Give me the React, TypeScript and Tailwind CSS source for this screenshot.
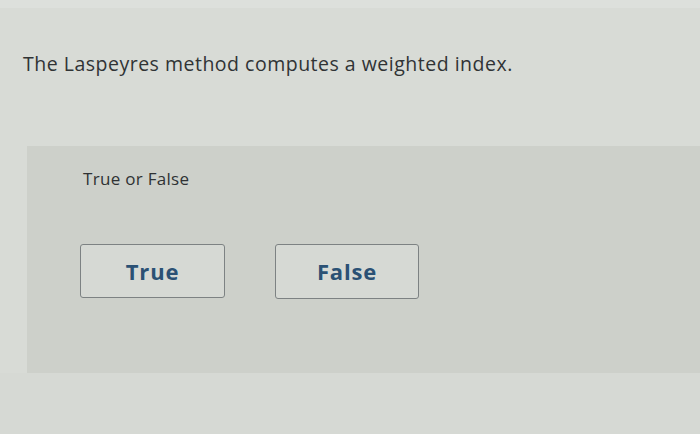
export default function App() {
  return (
    <div className="w-[700px] h-[434px] overflow-hidden bg-[#d8dbd6] font-['Open_Sans',sans-serif] text-[#2e3133]">
      <div className="h-[8px] bg-[#dde0dc]" />
      <div className="pl-[23px] pt-[42px] h-[138px]">
        <p className="text-[19.5px] leading-[28px] tracking-[0.5px] text-[#303335]">
          The Laspeyres method computes a weighted index.
        </p>
      </div>
      <div className="ml-[27px] h-[227px] bg-[#cdd0ca] pt-[22px] pl-[56px]">
        <p className="text-[17px] leading-[22px] tracking-[0.3px] text-[#2f3234]">True or False</p>
        <div className="flex gap-[50px] mt-[54px] -ml-[3px]">
          <button className="w-[145px] h-[54px] rounded-[3px] border border-[#7d8283] bg-[#d6d9d4] text-[22px] font-bold tracking-[0.8px] text-[#2b5174]">
            True
          </button>
          <button className="w-[144px] h-[55px] rounded-[3px] border border-[#7d8283] bg-[#d6d9d4] text-[22px] font-bold tracking-[0.8px] text-[#2b5174]">
            False
          </button>
        </div>
      </div>
      <div className="h-[61px] bg-[#d6d9d4]" />
    </div>
  );
}
